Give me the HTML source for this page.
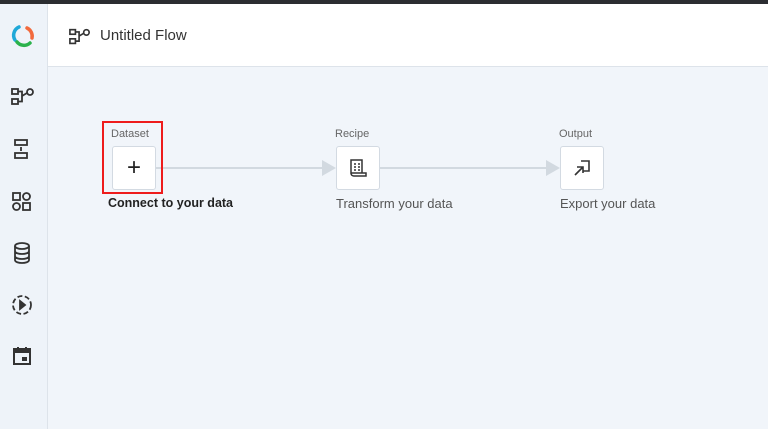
<!DOCTYPE html><html><head><style>
body{margin:0;width:768px;height:429px;overflow:hidden;font-family:"Liberation Sans",sans-serif;background:#f1f5fa;position:relative}
.top{position:absolute;left:0;top:0;width:768px;height:4px;background:#2b2d31}
.side{position:absolute;left:0;top:4px;width:47px;height:425px;background:#eef3f9;border-right:1px solid #dde3ea}
.hdr{position:absolute;left:48px;top:4px;width:720px;height:62px;background:#fff;border-bottom:1px solid #dde3ea}
.ic{position:absolute;left:11px}
.box{position:absolute;top:146px;width:42px;height:42px;background:#fff;border:1px solid #d3dae2;border-radius:3px}
.lbl{position:absolute;top:128px;font-size:11px;color:#666}
.txt{position:absolute;top:196px;font-size:13px;color:#555}
.line{position:absolute;top:167px;height:2px;background:#d2d9e0}
.arr{position:absolute;top:160px;width:0;height:0;border-top:8px solid transparent;border-bottom:8px solid transparent;border-left:14px solid #d2d9e0}
</style></head><body>
<div class="top"></div>
<div class="side">
<svg class="ic" style="top:18px;left:9px" width="28" height="28" viewBox="0 0 28 28" fill="none" stroke-width="3.5" stroke-linecap="round"><path d="M10 5 A9 9 0 0 0 6 18" stroke="#1fa8d8"/><path d="M18 6 A9 9 0 0 1 23 16" stroke="#f26a3d"/><path d="M8 20 A9 9 0 0 0 21 21" stroke="#2bb24c"/></svg>
<svg class="ic" style="top:83px" width="24" height="20" viewBox="0 0 24 20" fill="none" stroke="#333" stroke-width="1.8"><rect x="1" y="2" width="6" height="5"/><rect x="1" y="12" width="6" height="5"/><circle cx="19" cy="5" r="3"/><path d="M7 4.5h4v10H7M11 9l5-3"/></svg>
<svg class="ic" style="top:134px;left:13px" width="18" height="24" viewBox="0 0 18 24" fill="none" stroke="#333" stroke-width="1.8"><rect x="2" y="2" width="12" height="5"/><rect x="2" y="15" width="12" height="5"/><path d="M8 9v4"/></svg>
<svg class="ic" style="top:188px;left:12px" width="20" height="20" viewBox="0 0 20 20" fill="none" stroke="#333" stroke-width="1.8"><rect x="1" y="1" width="7" height="7"/><circle cx="14.5" cy="4.5" r="3.5"/><circle cx="4.5" cy="14.5" r="3.5"/><rect x="11" y="11" width="7" height="7"/></svg>
<svg class="ic" style="top:238px;left:13px" width="18" height="22" viewBox="0 0 18 22" fill="none" stroke="#333" stroke-width="1.8"><ellipse cx="9" cy="4" rx="7" ry="3"/><path d="M2 4v14c0 4 14 4 14 0V4M2 9c0 4 14 4 14 0M2 14c0 4 14 4 14 0"/></svg>
<svg class="ic" style="top:290px" width="22" height="22" viewBox="0 0 22 22" fill="none" stroke="#333" stroke-width="1.8"><circle cx="11" cy="11" r="9" stroke-dasharray="5 2.5"/><path d="M9 7l5 4-5 4z" fill="#333"/></svg>
<svg class="ic" style="top:342px;left:12px" width="20" height="20" viewBox="0 0 20 20"><rect x="2" y="3" width="16" height="15" fill="none" stroke="#333" stroke-width="2"/><rect x="2" y="3" width="16" height="4" fill="#333"/><path d="M6 1v4M14 1v4" stroke="#333" stroke-width="2"/><rect x="10" y="11" width="5" height="4" fill="#333"/></svg>
</div>
<div class="hdr">
<svg style="position:absolute;left:21px;top:23px" width="22" height="20" viewBox="0 0 24 20" fill="none" stroke="#333" stroke-width="1.8"><rect x="1" y="2" width="6" height="5"/><rect x="1" y="12" width="6" height="5"/><circle cx="19" cy="5" r="3"/><path d="M7 4.5h4v10H7M11 9l5-3"/></svg>
<div style="position:absolute;left:52px;top:23px;font-size:15px;color:#333">Untitled Flow</div>
</div>
<div class="line" style="left:156px;width:168px"></div><div class="arr" style="left:322px"></div>
<div class="line" style="left:380px;width:168px"></div><div class="arr" style="left:546px"></div>
<div class="lbl" style="left:111px">Dataset</div>
<div class="lbl" style="left:335px">Recipe</div>
<div class="lbl" style="left:559px">Output</div>
<div class="box" style="left:112px"><div style="position:absolute;left:0;right:0;top:7px;text-align:center;font-size:24px;color:#222">+</div></div>
<div class="box" style="left:336px"><svg style="position:absolute;left:11px;top:11px" width="20" height="20" viewBox="0 0 20 20" fill="none" stroke="#333" stroke-width="1.5"><path d="M3 2h11v13H3zM3 15c0 3 3 3 3 3h12v-3H14"/><path d="M6 6h2M10 6h2M6 9h2M10 9h2M6 12h2M10 12h2"/></svg></div>
<div class="box" style="left:560px"><svg style="position:absolute;left:11px;top:11px" width="20" height="20" viewBox="0 0 20 20" fill="none" stroke="#333" stroke-width="1.6"><path d="M9 3h8v10h-6M3 17l8-8M5 9h6v6"/></svg></div>
<div style="position:absolute;left:102px;top:121px;width:57px;height:69px;border:2.5px solid #ee1c1c"></div>
<div class="txt" style="left:108px;color:#222;font-weight:bold;font-size:12.5px">Connect to your data</div>
<div class="txt" style="left:336px">Transform your data</div>
<div class="txt" style="left:560px">Export your data</div>
</body></html>
